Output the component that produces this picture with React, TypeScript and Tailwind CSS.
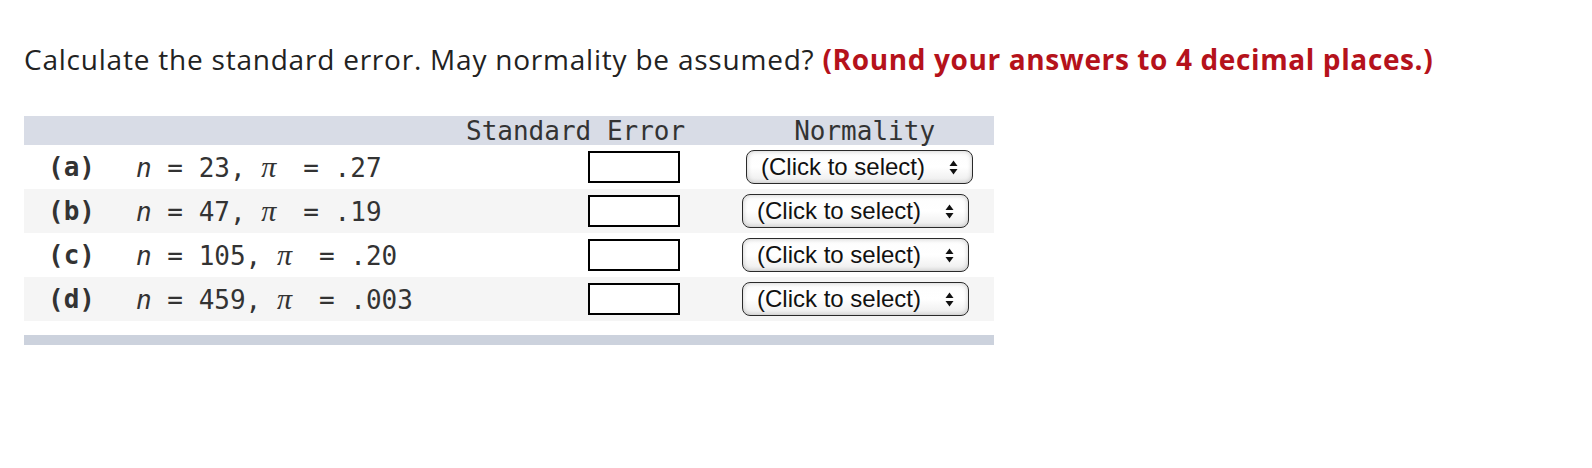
import React from 'react';

// question rows
const rows = [
  { label: '(a)', n: '23', pi: '.27', shift: false },
  { label: '(b)', n: '47', pi: '.19', shift: true },
  { label: '(c)', n: '105', pi: '.20', shift: true },
  { label: '(d)', n: '459', pi: '.003', shift: true },
];

function Arrows() {
  return (
    <svg width="9" height="15" viewBox="0 0 9 15" className="shrink-0">
      <path d="M4.5 0.5 L8.5 6 L0.5 6 Z" fill="#111" />
      <path d="M4.5 14.5 L8.5 9 L0.5 9 Z" fill="#111" />
    </svg>
  );
}

function SelectBox({ shift }: { shift: boolean }) {
  return (
    <div
      className={`flex h-[34px] w-[227px] items-center justify-between rounded-[8px] border-[1.5px] border-[#2a2a2a] bg-linear-to-b from-[#fdfdfd] via-white to-[#ececec] pl-[14px] pr-[14px] shadow-[inset_0_0_5px_rgba(0,0,0,0.22)] ${
        shift ? 'ml-[62px]' : 'ml-[66px]'
      }`}
    >
      <span className="font-['Liberation_Sans',Arial,sans-serif] text-[24px] leading-none text-[#111]">
        (Click to select)
      </span>
      <Arrows />
    </div>
  );
}

export default function App() {
  return (
    <div className="min-h-[468px] w-[1592px] bg-white pl-[24px] pt-[41px]">
      <p className="font-['Open_Sans',sans-serif] text-[28px] leading-[36px] tracking-[0.78px] text-[#222]">
        Calculate the standard error. May normality be assumed?{' '}
        <span className="font-bold tracking-[0.62px] text-[#b5121b]">
          (Round your answers to 4 decimal places.)
        </span>
      </p>

      <div className="mt-[39px] w-[970px] font-['DejaVu_Sans_Mono',monospace] text-[26px] text-[#333]">
        {/* header */}
        <div className="flex h-[29px] items-center bg-[#d8dce6] leading-none">
          <span className="ml-[442px]">Standard Error</span>
          <span className="ml-[109px]">Normality</span>
        </div>

        {rows.map((r, i) => (
          <div
            key={r.label}
            className={`flex h-[44px] items-center ${i % 2 === 1 ? 'bg-[#f5f5f5]' : 'bg-white'}`}
          >
            <span className="w-[90px] pl-[24px] font-bold leading-none">{r.label}</span>
            <span className="w-[474px] whitespace-pre pl-[22px] leading-none">
              <span className="italic">n</span> = {r.n},{' '}
              <span className="font-['Liberation_Serif',serif] text-[30px] italic">π</span>
              <span className="ml-[27px]">= {r.pi}</span>
            </span>
            <div className="box-border h-[32px] w-[92px] border-2 border-black bg-white" />
            <SelectBox shift={r.shift} />
          </div>
        ))}

        <div className="mt-[14px] h-[10px] bg-[#ccd2dd]" />
      </div>
    </div>
  );
}
